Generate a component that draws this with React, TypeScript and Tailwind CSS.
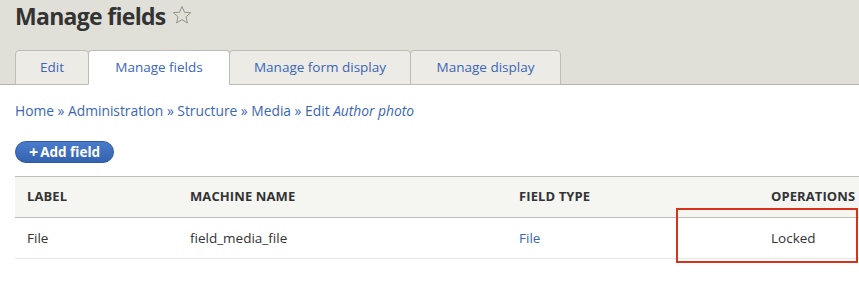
import React from "react";

const font = { fontFamily: '"Open Sans", "DejaVu Sans", sans-serif' };

const tabs = [
  { label: "Edit", width: "w-[74px]", active: false },
  { label: "Manage fields", width: "w-[142px]", active: true },
  { label: "Manage form display", width: "w-[182px]", active: false },
  { label: "Manage display", width: "w-[151px]", active: false },
];

function Star() {
  return (
    <svg width="20" height="20" viewBox="0 0 24 24" className="ml-[6px] mt-[4px]">
      <path
        d="M12 1.8l3 6.9 7.4.6-5.6 4.9 1.7 7.3L12 17.6l-6.5 3.9 1.7-7.3-5.6-4.9 7.4-.6z"
        fill="none"
        stroke="#8a8d7e"
        strokeWidth="1.1"
        strokeLinejoin="round"
      />
    </svg>
  );
}

export default function App() {
  return (
    <main className="w-[859px] h-[302px] overflow-hidden bg-white text-[#333]" style={font}>
      <div className="h-[85px] bg-[#e0dfd8] border-b border-[#b5b4ae] flex flex-col justify-between px-[15px]">
        <div className="flex items-start pt-[1px]">
          <h1 className="text-[23px] font-bold leading-[30px] text-[#333] tracking-[-0.7px]">Manage fields</h1>
          <Star />
        </div>
        <div className="flex -mb-px">
          {tabs.map((t) => (
            <div
              key={t.label}
              className={
                "h-[35px] flex items-center justify-center border border-[#bcbcb6] rounded-t-[4px] -ml-px first:ml-0 text-[13.5px] text-[#3b66b8] " +
                t.width +
                (t.active ? " bg-white border-b-white" : " bg-[#ecebe6]")
              }
            >
              {t.label}
            </div>
          ))}
        </div>
      </div>

      <div className="px-[15px]">
        <nav className="mt-[16px] text-[13.8px] leading-[20px] text-[#3b66b8]">
          Home » Administration » Structure » Media » Edit <em>Author photo</em>
        </nav>

        <button className="mt-[20px] h-[22px] px-[13px] rounded-full bg-gradient-to-b from-[#4a7ccb] to-[#3462b0] border border-[#2d5aa5] text-white text-[13.5px] font-bold leading-[20px] flex items-center">
          <span className="text-[16px] font-bold mr-[2px] leading-none">+</span>Add field
        </button>

        <div className="mt-[13px] w-[870px] relative">
          <div className="grid grid-cols-[163px_329px_252px_126px] h-[42px] items-center bg-[#f5f5f2] border-y border-[#bfbfba] text-[13px] font-bold uppercase tracking-[0.1px]">
            <div className="pl-[12px]">Label</div>
            <div className="pl-[12px]">Machine name</div>
            <div className="pl-[12px]">Field type</div>
            <div className="pl-[12px]">Operations</div>
          </div>
          <div className="grid grid-cols-[163px_329px_252px_126px] h-[41px] items-center border-b border-[#e6e6e3] text-[13.5px]">
            <div className="pl-[12px]">File</div>
            <div className="pl-[12px]">field_media_file</div>
            <div className="pl-[12px] text-[#3b66b8]">File</div>
            <div className="pl-[12px]">Locked</div>
          </div>
          <div className="absolute left-[661px] top-[32px] w-[182px] h-[55px] border-2 border-[#d8321b]" />
        </div>
      </div>
    </main>
  );
}
